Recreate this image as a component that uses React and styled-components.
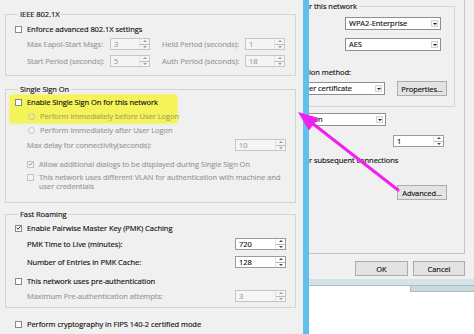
import React from 'react'
import styled, { createGlobalStyle } from 'styled-components'

// Global -------------------------------------------------
const GlobalStyle = createGlobalStyle`
  html, body {
    margin: 0;
    padding: 0;
    background: #ffffff;
  }
  body {
    font-family: "Open Sans", "Noto Sans", sans-serif;
    font-size: 7.5px;
    letter-spacing: -0.05px;
    color: #111111;
    -webkit-text-stroke: 0.15px currentColor;
  }
`

const Screen = styled.div`
  position: relative;
  width: 474px;
  height: 334px;
  display: flex;
  overflow: hidden;
  background: #ffffff;
`

// Front dialog ---------------
const FrontDialog = styled.div`
  width: 309px;
  flex-shrink: 0;
  box-sizing: border-box;
  background: #f0f0f0;
  border-right: 6px solid #5fc1ea;
  padding: 9px 0 0 5px;
  display: flex;
  flex-direction: column;
`

const Group = styled.fieldset`
  margin: ${(p) => p.$mt || 0}px 0 0 0;
  padding: 0 9px ${(p) => p.$pb}px 9px;
  width: 291px;
  box-sizing: border-box;
  min-width: 0;
  border: 1px solid #d4d4d4;
`

const Legend = styled.legend`
  padding: 0 2px;
  margin-left: 3px;
  line-height: 10px;
  font-size: 7.5px;
`

const Text = styled.span`
  white-space: nowrap;
  line-height: ${(p) => p.$lh || 10}px;
  color: ${(p) => (p.$onMark ? '#aaa75a' : p.$disabled ? '#9a9a9a' : '#111111')};
`

const CheckRow = styled.div`
  height: ${(p) => p.$h || 14}px;
  margin-top: ${(p) => p.$mt || 0}px;
  margin-left: ${(p) => p.$indent || 0}px;
  display: flex;
  align-items: ${(p) => (p.$top ? 'flex-start' : 'center')};
  gap: 5px;
`

const FieldRow = styled.div`
  height: 12px;
  margin-top: ${(p) => p.$mt || 0}px;
  padding-left: 12px;
  display: flex;
  align-items: center;
  justify-content: space-between;
`

const PairRow = styled.div`
  height: 12px;
  margin-top: ${(p) => p.$mt || 0}px;
  padding-left: 12px;
  display: grid;
  grid-template-columns: 83px 40px 95px 40px;
  align-items: center;
`

const PairLabel = styled(Text)`
  padding-left: ${(p) => (p.$second ? 12 : 0)}px;
`

const Highlight = styled.div`
  margin: 1px 0 0 -5px;
  padding-left: 5px;
  width: 167px;
  box-sizing: border-box;
  background: #f4f35a;
  border-radius: 2px;
  box-shadow: 0 0 2px 1px rgba(244, 243, 90, 0.7);
`

const CheckBox = styled.span`
  width: 7px;
  height: 7px;
  flex-shrink: 0;
  box-sizing: border-box;
  margin-top: ${(p) => p.$mt || 0}px;
  border: 1px solid ${(p) => (p.$disabled ? '#c3c3c3' : '#8a8a8a')};
  background: ${(p) => (p.$disabled ? '#f4f4f4' : '#ffffff')};
  display: flex;
  align-items: center;
  justify-content: center;
`

const RadioDot = styled.span`
  width: 7px;
  height: 7px;
  flex-shrink: 0;
  box-sizing: border-box;
  border-radius: 50%;
  border: 1px solid #c2c2c2;
  background: ${(p) => (p.$onMark ? '#eeee70' : '#f4f4f4')};
`

const SpinBox = styled.div`
  width: ${(p) => p.$w}px;
  height: 12px;
  margin-left: ${(p) => p.$ml || 0}px;
  margin-top: ${(p) => p.$mt || 0}px;
  box-sizing: border-box;
  border: 1px solid ${(p) => (p.$disabled ? '#c6c6c6' : '#9c9c9c')};
  background: ${(p) => (p.$disabled ? '#f5f5f5' : '#ffffff')};
  display: flex;
`

const SpinValue = styled.span`
  flex: 1;
  padding-left: 3px;
  line-height: 10px;
  color: ${(p) => (p.$disabled ? '#a0a0a0' : '#111111')};
`

const SpinButtons = styled.span`
  width: 9px;
  display: flex;
  flex-direction: column;
  border-left: 1px solid #e2e2e2;
`

const SpinHalf = styled.span`
  flex: 1;
  display: flex;
  align-items: center;
  justify-content: center;
  border-top: ${(p) => (p.$down ? '1px solid #b9b9b9' : 'none')};
`

const Arrow = styled.span`
  width: 0;
  height: 0;
  border-left: 2px solid transparent;
  border-right: 2px solid transparent;
  ${(p) =>
    p.$down
      ? `border-top: 2px solid ${p.$color};`
      : `border-bottom: 2px solid ${p.$color};`}
`

// Back dialog ---------------
const BackWindow = styled.div`
  flex: 1;
  display: flex;
  flex-direction: column;
`

const BackBody = styled.div`
  background: #f0f0f0;
  padding: 0 9px 3px 0;
  display: flex;
  flex-direction: column;
`

const TabPanel = styled.div`
  height: 254px;
  box-sizing: border-box;
  border-right: 1px solid #c4c4c4;
  border-bottom: 1px solid #c4c4c4;
  display: flex;
  flex-direction: column;
`

const BackGroup = styled.fieldset`
  margin: 1px 0 0 0;
  padding: 0 0 10px 0;
  width: 146px;
  box-sizing: border-box;
  min-width: 0;
  border: 1px solid #d4d4d4;
  border-left: none;
`

const BackLegend = styled.legend`
  padding: 0 2px 0 0;
  margin: 0;
  line-height: 10px;
  font-size: 7.5px;
`

const Block = styled.div`
  margin-top: ${(p) => p.$mt || 0}px;
  margin-left: ${(p) => p.$ml || 0}px;
  display: flex;
  align-items: center;
  gap: ${(p) => p.$gap || 0}px;
`

const Combo = styled.div`
  width: ${(p) => p.$w}px;
  height: 13px;
  box-sizing: border-box;
  border: 1px solid #8f8f8f;
  border-left: ${(p) => (p.$cut ? 'none' : '1px solid #8f8f8f')};
  background: #ffffff;
  display: flex;
  align-items: center;
`

const ComboText = styled.span`
  flex: 1;
  padding-left: ${(p) => (p.$cut ? 0 : 3)}px;
  line-height: 11px;
  white-space: nowrap;
  overflow: hidden;
`

const ComboArrow = styled.span`
  width: 7px;
  height: 7px;
  margin-right: 2px;
  box-sizing: border-box;
  border: 1px solid #d2d2d2;
  background: #f6f6f6;
  display: flex;
  align-items: center;
  justify-content: center;
`

const Button = styled.div`
  width: ${(p) => p.$w}px;
  height: 15px;
  box-sizing: border-box;
  border: 1px solid #acacac;
  background: #e3e3e3;
  display: flex;
  align-items: center;
  justify-content: center;
  line-height: 10px;
`

const ButtonRow = styled.div`
  margin-top: 7px;
  display: flex;
  justify-content: flex-end;
  gap: 5px;
`

const Frame = styled.div`
  height: 7px;
  box-sizing: border-box;
  background: #d3e3e8;
  border-bottom: 1px solid #a9bcc2;
`

const FrameBehind = styled.div`
  height: 6px;
  margin-left: 101px;
  box-sizing: border-box;
  background: #cad9de;
  border: 1px solid #a9bcc2;
  border-top: none;
  border-right: none;
`

const Annotation = styled.svg`
  position: absolute;
  left: 0;
  top: 0;
  pointer-events: none;
`

// Pieces ---------------
function Check({ checked, disabled, mt }) {
  return (
    <CheckBox $disabled={disabled} $mt={mt}>
      {checked && (
        <svg width="6" height="6" viewBox="0 0 6 6">
          <path
            d="M0.8 3 L2.4 4.6 L5.3 1"
            fill="none"
            stroke={disabled ? '#9a9a9a' : '#202020'}
            strokeWidth="1.2"
          />
        </svg>
      )}
    </CheckBox>
  )
}

function Spin({ value, w, disabled, ml, mt }) {
  const color = disabled ? '#9a9a9a' : '#4a4a4a'
  return (
    <SpinBox $w={w} $disabled={disabled} $ml={ml} $mt={mt}>
      <SpinValue $disabled={disabled}>{value}</SpinValue>
      <SpinButtons>
        <SpinHalf>
          <Arrow $color={color} />
        </SpinHalf>
        <SpinHalf $down>
          <Arrow $down $color={color} />
        </SpinHalf>
      </SpinButtons>
    </SpinBox>
  )
}

function Select({ value, w, cut }) {
  return (
    <Combo $w={w} $cut={cut}>
      <ComboText $cut={cut}>{value}</ComboText>
      <ComboArrow>
        <Arrow $down $color="#202020" />
      </ComboArrow>
    </Combo>
  )
}

// Composant App --------------------------------------------------
export default function App() {
  return (
    <>
      <GlobalStyle />
      <Screen>
        <FrontDialog>
          <Group $pb={8}>
            <Legend>IEEE 802.1X</Legend>
            <CheckRow $mt={3}>
              <Check />
              <Text>Enforce advanced 802.1X settings</Text>
            </CheckRow>
            <PairRow $mt={2}>
              <PairLabel $disabled>Max Eapol-Start Msgs:</PairLabel>
              <Spin value="3" w={40} disabled />
              <PairLabel $disabled $second>Held Period (seconds):</PairLabel>
              <Spin value="1" w={40} disabled />
            </PairRow>
            <PairRow $mt={5}>
              <PairLabel $disabled>Start Period (seconds):</PairLabel>
              <Spin value="5" w={40} disabled />
              <PairLabel $disabled $second>Auth Period (seconds):</PairLabel>
              <Spin value="18" w={40} disabled />
            </PairRow>
          </Group>

          <Group $mt={8} $pb={11}>
            <Legend>Single Sign On</Legend>
            <Highlight>
              <CheckRow>
                <Check />
                <Text>Enable Single Sign On for this network</Text>
              </CheckRow>
              <CheckRow $indent={13}>
                <RadioDot $onMark />
                <Text $onMark>Perform immediately before User Logon</Text>
              </CheckRow>
            </Highlight>
            <CheckRow $indent={13}>
              <RadioDot />
              <Text $disabled>Perform immediately after User Logon</Text>
            </CheckRow>
            <FieldRow $mt={2}>
              <Text $disabled>Max delay for connectivity(seconds):</Text>
              <Spin value="10" w={51} disabled />
            </FieldRow>
            <CheckRow $mt={6} $indent={12}>
              <Check checked disabled />
              <Text $disabled>Allow additional dialogs to be displayed during Single Sign On</Text>
            </CheckRow>
            <CheckRow $mt={2} $indent={12} $h={18} $top>
              <Check disabled mt={1} />
              <Text $disabled $lh={9}>
                This network uses different VLAN for authentication with machine and
                <br />
                user credentials
              </Text>
            </CheckRow>
          </Group>

          <Group $mt={6} $pb={5}>
            <Legend>Fast Roaming</Legend>
            <CheckRow $mt={2}>
              <Check checked />
              <Text>Enable Pairwise Master Key (PMK) Caching</Text>
            </CheckRow>
            <FieldRow $mt={3}>
              <Text>PMK Time to Live (minutes):</Text>
              <Spin value="720" w={51} />
            </FieldRow>
            <FieldRow $mt={6}>
              <Text>Number of Entries in PMK Cache:</Text>
              <Spin value="128" w={51} />
            </FieldRow>
            <CheckRow $mt={6}>
              <Check />
              <Text>This network uses pre-authentication</Text>
            </CheckRow>
            <FieldRow $mt={2}>
              <Text $disabled>Maximum Pre-authentication attempts:</Text>
              <Spin value="3" w={51} disabled />
            </FieldRow>
          </Group>

          <CheckRow $mt={9} $indent={10}>
            <Check />
            <Text>Perform cryptography in FIPS 140-2 certified mode</Text>
          </CheckRow>
        </FrontDialog>

        <BackWindow>
          <BackBody>
            <TabPanel>
              <BackGroup>
                <BackLegend>r this network</BackLegend>
                <Block $mt={6} $ml={36}>
                  <Select value="WPA2-Enterprise" w={96} />
                </Block>
                <Block $mt={8} $ml={36}>
                  <Select value="AES" w={96} />
                </Block>
                <Block $mt={16}>
                  <Text>ion method:</Text>
                </Block>
                <Block $mt={4} $gap={12}>
                  <Select value="er certificate" w={76} cut />
                  <Button $w={50}>Properties...</Button>
                </Block>
              </BackGroup>
              <Block $mt={6}>
                <Select value="tion" w={77} cut />
              </Block>
              <Block $mt={9} $ml={84}>
                <Spin value="1" w={51} />
              </Block>
              <Block $mt={8}>
                <Text>r subsequent connections</Text>
              </Block>
              <Block $mt={20} $ml={88}>
                <Button $w={50}>Advanced...</Button>
              </Block>
            </TabPanel>
            <ButtonRow>
              <Button $w={53}>OK</Button>
              <Button $w={52}>Cancel</Button>
            </ButtonRow>
          </BackBody>
          <Frame />
          <FrameBehind />
        </BackWindow>

        <Annotation width="474" height="334" viewBox="0 0 474 334">
          <line x1="398" y1="190" x2="312" y2="123" stroke="#f021ef" strokeWidth="3" strokeLinecap="round" />
          <polygon points="298,112 318.7,118 308.9,130.6" fill="#f021ef" />
        </Annotation>
      </Screen>
    </>
  )
}
